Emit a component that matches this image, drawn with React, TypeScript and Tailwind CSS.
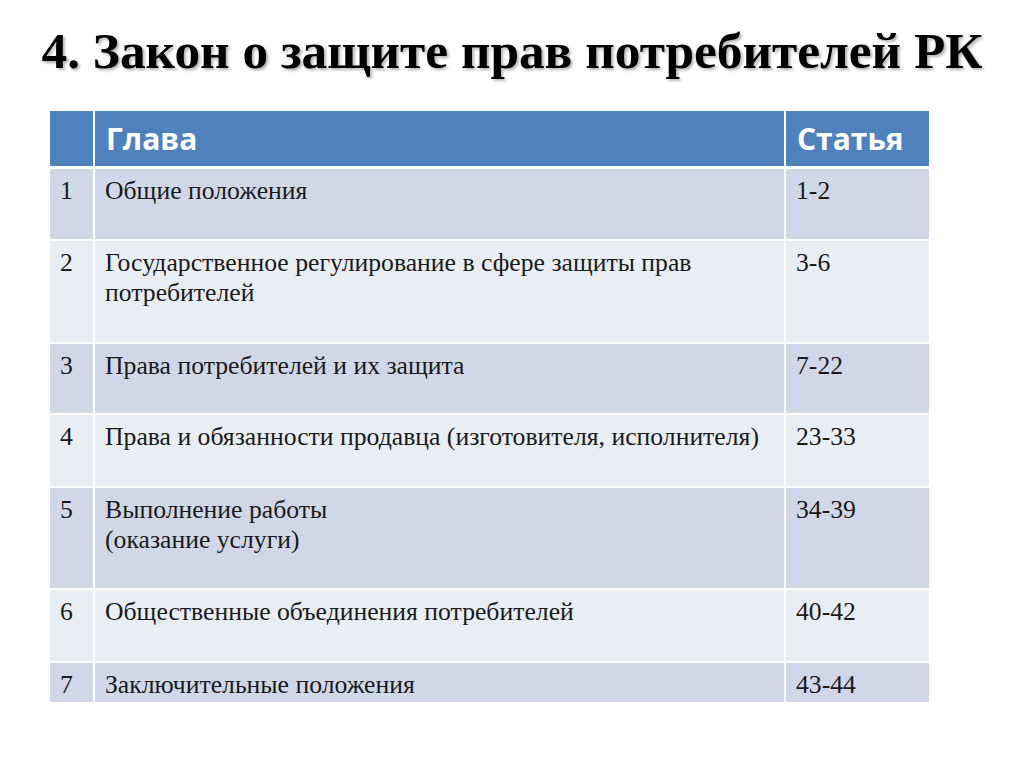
import React from 'react';

interface Row {
  num: string;
  title: React.ReactNode;
  articles: string;
  height: string;
}

const rows: Row[] = [
  { num: '1', title: 'Общие положения', articles: '1-2', height: 'h-[70px]' },
  {
    num: '2',
    title: (
      <>
        Государственное регулирование в сфере защиты прав
        <br />
        потребителей
      </>
    ),
    articles: '3-6',
    height: 'h-[101px]',
  },
  { num: '3', title: 'Права потребителей и их защита', articles: '7-22', height: 'h-[69px]' },
  { num: '4', title: 'Права и обязанности продавца (изготовителя, исполнителя)', articles: '23-33', height: 'h-[71px]' },
  {
    num: '5',
    title: (
      <>
        Выполнение работы
        <br />
        (оказание услуги)
      </>
    ),
    articles: '34-39',
    height: 'h-[100px]',
  },
  { num: '6', title: 'Общественные объединения потребителей', articles: '40-42', height: 'h-[71px]' },
  { num: '7', title: 'Заключительные положения', articles: '43-44', height: 'h-[39px]' },
];

export default function App() {
  return (
    <div className="w-[1024px] h-[767px] bg-white overflow-hidden">
      <h1 className="[font-family:'Liberation_Serif','Times_New_Roman',serif] pt-[21px] text-center text-[51.3px] leading-[60px] font-bold text-black [text-shadow:2px_2px_3px_rgba(0,0,0,0.3)]">
        4. Закон о защите прав потребителей РК
      </h1>

      <div className="ml-[50px] mt-[30px] w-[879px] flex flex-col bg-white">
        <div className="grid grid-cols-[43px_689px_143px] gap-x-[2px] h-[55px] mb-[3px] bg-white [font-family:'Open_Sans',sans-serif] font-bold text-[30px] text-white">
          <div className="bg-[#4f81bd]" />
          <div className="bg-[#4f81bd] pl-[11px] flex items-center">Глава</div>
          <div className="bg-[#4f81bd] pl-[11px] flex items-center">Статья</div>
        </div>

        <div className="flex flex-col gap-y-[2px]">
          {rows.map((r, i) => {
            const bg = i % 2 === 0 ? 'bg-[#d0d8e8]' : 'bg-[#e9edf4]';
            return (
              <div
                key={r.num}
                className={`grid grid-cols-[43px_689px_143px] gap-x-[2px] ${r.height} [font-family:'Liberation_Serif','Times_New_Roman',serif] text-[25.7px] leading-[30px] text-[#1a1a1a]`}
              >
                <div className={`${bg} pl-[10px] pt-[7px]`}>{r.num}</div>
                <div className={`${bg} pl-[10px] pt-[7px]`}>{r.title}</div>
                <div className={`${bg} pl-[10px] pt-[7px]`}>{r.articles}</div>
              </div>
            );
          })}
        </div>
      </div>
    </div>
  );
}
